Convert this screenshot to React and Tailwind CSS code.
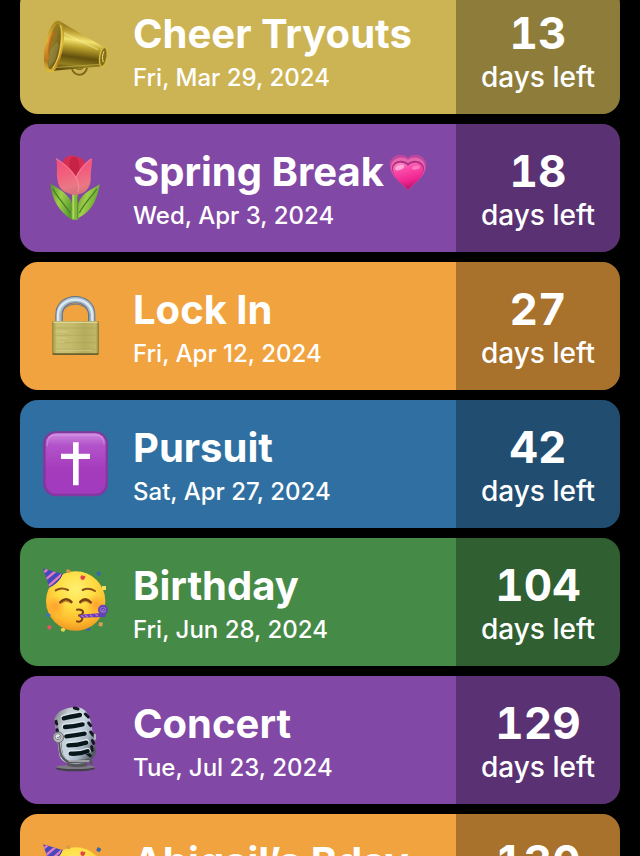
import React from 'react';

const Megaphone = () => (
  <svg viewBox="0 0 270 270" className="size-[90px] shrink-0" aria-hidden="true">
    <defs>
      <linearGradient id="mega-body" x1="0.55" y1="0" x2="0.4" y2="1">
        <stop offset="0" stopColor="#77631a" />
        <stop offset="0.2" stopColor="#b5982b" />
        <stop offset="0.38" stopColor="#f3e36f" />
        <stop offset="0.52" stopColor="#b9a02b" />
        <stop offset="0.72" stopColor="#63500c" />
        <stop offset="0.88" stopColor="#93801f" />
        <stop offset="1" stopColor="#5f4b0b" />
      </linearGradient>
      <linearGradient id="mega-mouth" x1="0" y1="0" x2="1" y2="0.3">
        <stop offset="0" stopColor="#c65f12" />
        <stop offset="0.5" stopColor="#8f7a24" />
        <stop offset="1" stopColor="#6f5b16" />
      </linearGradient>
      <linearGradient id="mega-rim" x1="0" y1="0" x2="0" y2="1">
        <stop offset="0" stopColor="#a88a1d" />
        <stop offset="0.4" stopColor="#dcb93c" />
        <stop offset="0.8" stopColor="#b7791a" />
        <stop offset="1" stopColor="#d9b93a" />
      </linearGradient>
    </defs>
    <path d="M127 188c1 13 10 20 21 20s20-8 22-20" fill="none" stroke="#7b6717" strokeWidth="8" />
    <path d="M129 187c2 12 10 18 19 18s17-7 19-18" fill="none" stroke="#d9c55c" strokeWidth="3" />
    <path d="M138 187c2 8 18 9 21 0" fill="none" stroke="#80701e" strokeWidth="4" />
    <path d="M92 50L222 127C229 141 226 170 216 184L64 198Z" fill="url(#mega-body)" />
    <path d="M99 82L204 134" stroke="#fff3a0" strokeWidth="4" opacity="0.45" />
    <path d="M72 188L210 178" stroke="#cdbb51" strokeWidth="3" opacity="0.6" />
    <ellipse cx="220" cy="156" rx="11" ry="29" transform="rotate(9 220 156)" fill="#83701c" stroke="#d7bb42" strokeWidth="4" />
    <path d="M222 139c-5 8-6 23-2 32" fill="none" stroke="#f3df77" strokeWidth="3" />
    <ellipse cx="72" cy="125" rx="22" ry="74" transform="rotate(10 72 125)" fill="url(#mega-mouth)" stroke="url(#mega-rim)" strokeWidth="10" />
    <path d="M69 82C54 104 49 136 54 164" fill="none" stroke="#ee7a21" strokeWidth="7" opacity="0.5" />
    <path d="M61 136l20-25 6 10-12 46-20 19Z" fill="#9fa06a" opacity="0.35" />
    <path d="M91 60C104 92 90 162 69 189" fill="none" stroke="#efd15c" strokeWidth="3" />
  </svg>
);

const Tulip = () => (
  <svg viewBox="0 9 270 270" className="size-[90px] shrink-0" aria-hidden="true">
    <defs>
      <linearGradient id="tulip-petal" x1="0" y1="0" x2="0.2" y2="1">
        <stop offset="0" stopColor="#f04b78" />
        <stop offset="0.5" stopColor="#f2607f" />
        <stop offset="0.85" stopColor="#ea7884" />
        <stop offset="1" stopColor="#d9747c" />
      </linearGradient>
      <linearGradient id="tulip-leaf" x1="0" y1="0" x2="1" y2="0.5">
        <stop offset="0" stopColor="#4e8c2c" />
        <stop offset="0.5" stopColor="#a1cf48" />
        <stop offset="1" stopColor="#579c30" />
      </linearGradient>
    </defs>
    <path d="M61 129C79 145 110 154 125 187L132 239 121 236C91 216 64 181 61 129Z" fill="url(#tulip-leaf)" />
    <path d="M209 132C188 149 157 155 145 190L139 239 149 232C180 216 202 184 209 132Z" fill="url(#tulip-leaf)" />
    <path d="M68 146C82 172 99 188 121 219M201 146C185 171 165 186 148 219" fill="none" stroke="#4a842a" strokeWidth="4" />
    <path d="M126 158h17l2 80q-11 4-20 0Z" fill="#82b63f" />
    <path d="M130 165v71" stroke="#b7d75b" strokeWidth="5" />
    <path d="M143 168v68" stroke="#518c2e" strokeWidth="3" />
    <path d="M96 69C105 47 125 42 139 50C155 49 162 61 166 72L144 119 102 103Z" fill="#d62e55" />
    <path d="M125 52C118 62 116 78 121 98L144 115C151 89 150 65 139 51Z" fill="#c62347" />
    <path d="M186 55C169 61 146 89 137 111L104 139C112 154 122 163 134 164C165 164 180 145 182 121C181 95 187 74 186 55Z" fill="url(#tulip-petal)" />
    <path d="M78 53C91 65 119 79 137 109C150 133 150 154 139 166C108 162 86 149 83 122C78 99 84 75 78 53Z" fill="url(#tulip-petal)" />
    <path d="M79 56C94 67 121 83 137 111C147 130 148 146 143 156" fill="none" stroke="#ff9aac" strokeWidth="3" opacity="0.7" />
    <path d="M184 57C169 66 149 91 139 111" fill="none" stroke="#ff8aa2" strokeWidth="3" opacity="0.7" />
  </svg>
);

const Lock = () => (
  <svg viewBox="0 3 270 270" className="size-[90px] shrink-0" aria-hidden="true">
    <defs>
      <linearGradient id="lock-body" x1="0" y1="0" x2="1" y2="0">
        <stop offset="0" stopColor="#9c9440" />
        <stop offset="0.09" stopColor="#c8bf70" />
        <stop offset="0.4" stopColor="#c4bb6c" />
        <stop offset="0.7" stopColor="#b5ac5c" />
        <stop offset="0.94" stopColor="#c0b869" />
        <stop offset="1" stopColor="#8c8439" />
      </linearGradient>
    </defs>
    <path d="M87 132V104C87 44 185 44 185 104V132" fill="none" stroke="#657587" strokeWidth="22" />
    <path d="M87 132V104C87 44 185 44 185 104V132" fill="none" stroke="#a8bac9" strokeWidth="16" />
    <path d="M84 130V104C86 47 181 42 187 102V130" fill="none" stroke="#dce9f5" strokeWidth="7" />
    <path d="M97 122V101C104 63 168 63 177 102V122" fill="none" stroke="#66798c" strokeWidth="3" />
    <rect x="67" y="124" width="139" height="101" rx="4" fill="#69612b" />
    <rect x="67" y="124" width="139" height="96" rx="4" fill="url(#lock-body)" />
    <path d="M70 127h133" stroke="#ded693" strokeWidth="4" />
    <path d="M73 144h127M73 166h127M73 188h127M73 208h127" stroke="#a79e52" strokeWidth="2" opacity="0.65" />
    <path d="M81 155h34M81 174h29M81 187h22M81 211h105" stroke="#e2dca2" strokeWidth="2" opacity="0.75" />
  </svg>
);

const Cross = () => (
  <svg viewBox="0 -3 270 270" className="size-[90px] shrink-0" aria-hidden="true">
    <defs>
      <linearGradient id="cross-tile" x1="0" y1="0" x2="0" y2="1">
        <stop offset="0" stopColor="#cc86dd" />
        <stop offset="0.2" stopColor="#b253ca" />
        <stop offset="0.6" stopColor="#a53bbd" />
        <stop offset="1" stopColor="#a23bbe" />
      </linearGradient>
    </defs>
    <rect x="39" y="34" width="195" height="195" rx="38" fill="#81389f" />
    <rect x="47" y="40" width="180" height="181" rx="31" fill="url(#cross-tile)" />
    <path d="M52 79V71Q52 45 79 45H194Q222 45 222 73" fill="none" stroke="#dea7e8" strokeWidth="4" opacity="0.45" />
    <path d="M129 67h17v34h34v16h-34v79h-17v-79H93v-16h36Z" fill="#fff" />
  </svg>
);

const PartyFace = () => (
  <svg viewBox="0 6 270 270" className="size-[90px] shrink-0" aria-hidden="true">
    <defs>
      <radialGradient id="party-face" cx="0.5" cy="0.3" r="0.7">
        <stop offset="0" stopColor="#fff071" />
        <stop offset="0.45" stopColor="#ffdc42" />
        <stop offset="0.8" stopColor="#fdb92c" />
        <stop offset="1" stopColor="#ef9822" />
      </radialGradient>
      <radialGradient id="party-cheek">
        <stop offset="0" stopColor="#ff8b2b" stopOpacity="0.65" />
        <stop offset="1" stopColor="#ff8b2b" stopOpacity="0" />
      </radialGradient>
      <clipPath id="party-hat">
        <path d="M39 40L97 57Q88 82 58 96Z" />
      </clipPath>
    </defs>
    <circle cx="137" cy="138" r="89" fill="url(#party-face)" />
    <circle cx="77" cy="153" r="31" fill="url(#party-cheek)" />
    <circle cx="197" cy="148" r="30" fill="url(#party-cheek)" />
    <g clipPath="url(#party-hat)">
      <rect x="34" y="34" width="72" height="66" fill="#4648bb" />
      <path d="M33 60L66 31M39 80L87 40M50 98L101 53" stroke="#e27bc2" strokeWidth="7" />
    </g>
    <path d="M58 96Q86 84 97 57" fill="none" stroke="#293aa9" strokeWidth="3" />
    <path d="M77 106Q94 95 114 105M158 105Q176 96 195 108" fill="none" stroke="#8b511b" strokeWidth="6" strokeLinecap="round" />
    <path d="M91 142Q107 124 124 141M151 141Q166 125 182 142" fill="none" stroke="#754013" strokeWidth="8" strokeLinecap="round" />
    <path d="M93 144Q107 135 121 142M154 142Q167 135 179 143" fill="none" stroke="#bd7a23" strokeWidth="3" />
    <path d="M141 164C154 162 162 168 158 176Q154 182 145 181Q158 184 157 191C156 199 148 202 141 199" fill="none" stroke="#744014" strokeWidth="6" strokeLinecap="round" />
    <path d="M148 179L224 173Q230 180 225 186L151 188Z" fill="#643fbc" />
    <path d="M154 181l7 5M166 180l7 6M180 179l7 6M196 177l8 6" stroke="#d56bc4" strokeWidth="4" />
    <circle cx="219" cy="164" r="12" fill="#9c73cf" stroke="#6144b1" strokeWidth="6" />
    <path d="M215 167Q213 158 221 159Q228 164 220 169" fill="none" stroke="#5638a8" strokeWidth="3" />
    <rect x="109" y="44" width="12" height="9" rx="2" transform="rotate(15 115 48)" fill="#d99845" />
    <path d="M151 65l5-5 4 3 6-1-1 8-6 6-7-4Z" fill="#e4434c" />
    <rect x="200" y="50" width="12" height="12" rx="2" transform="rotate(28 206 56)" fill="#3c67a8" />
    <rect x="216" y="93" width="12" height="12" fill="#f0df5b" />
    <rect x="206" y="202" width="12" height="12" rx="2" transform="rotate(10 212 208)" fill="#d99c57" />
    <path d="M48 177l7-3 8 6-7 7-7-2Z" fill="#3f73b8" />
    <path d="M51 215l5-5 9 3-1 9-8 2Z" fill="#dd5864" />
    <path d="M92 221l8-3 7 5-5 7-8-1Z" fill="#edd549" />
    <path d="M169 223l8-4 6 3-5 5h-8Z" fill="#405bb1" />
  </svg>
);

const Microphone = () => (
  <svg viewBox="0 0 270 270" className="size-[90px] shrink-0" aria-hidden="true">
    <defs>
      <linearGradient id="mic-body" x1="0" y1="0.1" x2="1" y2="0.7">
        <stop offset="0" stopColor="#777c82" />
        <stop offset="0.24" stopColor="#c3ccd3" />
        <stop offset="0.57" stopColor="#c6d5e1" />
        <stop offset="0.78" stopColor="#a5b4bf" />
        <stop offset="1" stopColor="#525963" />
      </linearGradient>
    </defs>
    <ellipse cx="136" cy="220" rx="59" ry="9" fill="#44404b" />
    <ellipse cx="136" cy="216" rx="58" ry="6" fill="#7d7a83" />
    <path d="M111 184h58l3 29q-30 8-59 0Z" fill="#55555c" />
    <path d="M73 73C80 46 112 35 142 37C166 39 176 60 183 82L198 166C200 189 176 204 146 207C117 209 92 201 88 180Z" fill="url(#mic-body)" />
    <path d="M75 78Q78 91 85 94L98 176Q98 185 90 187Z" fill="#868a90" />
    <path d="M133 39l11 3M166 57l9 9M176 84l6 8M182 111l7 9M187 137l4 8M185 155l2 11M171 175l10 7M78 79l2 8M81 104l2 6" stroke="#161820" strokeWidth="9" strokeLinecap="round" />
    <path d="M101 68Q117 64 150 58M105 94Q132 92 158 86M109 122Q137 119 164 114M115 149Q144 149 169 141M122 174Q149 176 173 167" fill="none" stroke="#dfe9f0" strokeWidth="17" strokeLinecap="round" />
    <path d="M101 70Q117 66 150 60M105 96Q132 94 158 88M109 124Q137 121 164 116M115 151Q144 151 169 143M122 176Q149 178 173 169" fill="none" stroke="#07171c" strokeWidth="13" strokeLinecap="round" />
    <path d="M89 137C92 163 89 188 117 202L166 197Q184 191 184 209" fill="none" stroke="#55575d" strokeWidth="9" />
    <path d="M91 140C94 168 94 185 116 196" fill="none" stroke="#c6cace" strokeWidth="3" />
    <path d="M116 198h62" stroke="#b9b8bd" strokeWidth="5" />
    <circle cx="85" cy="127" r="16" fill="#b7babf" stroke="#696c73" strokeWidth="3" />
    <circle cx="84" cy="125" r="9" fill="#e4e6e8" stroke="#85888e" strokeWidth="3" />
    <path d="M81 128Q88 132 90 122" fill="none" stroke="#6d7075" strokeWidth="3" />
    <path d="M193 117q5 8 0 18" fill="none" stroke="#b3b6bc" strokeWidth="6" />
  </svg>
);

const GrowingHeart = () => (
  <svg viewBox="0 0 120 120" className="size-10 shrink-0" aria-hidden="true">
    <defs>
      <linearGradient id="heart-fill" x1="0" y1="0" x2="0.3" y2="1">
        <stop offset="0" stopColor="#ff96c9" />
        <stop offset="0.3" stopColor="#fb4dab" />
        <stop offset="0.75" stopColor="#f02491" />
        <stop offset="1" stopColor="#c61570" />
      </linearGradient>
    </defs>
    <path d="M60 114C43 92 5 76 5 38C5 13 40-2 60 17C80-2 115 13 115 38C115 76 77 92 60 114Z" fill="#bd479f" />
    <path d="M60 114C44 94 9 77 9 44C9 20 41 8 60 24C79 8 111 20 111 44C111 77 76 94 60 114Z" fill="#e865ae" />
    <path d="M60 114C44 95 12 78 12 49C12 28 43 18 60 34C77 18 108 28 108 49C108 78 76 95 60 114Z" fill="#aa2e82" />
    <path d="M60 113C44 94 15 78 15 53C15 31 46 26 60 42C74 26 105 31 105 53C105 78 76 94 60 113Z" fill="url(#heart-fill)" />
    <ellipse cx="35" cy="47" rx="14" ry="7" transform="rotate(-20 35 47)" fill="#ffc1e1" opacity="0.75" />
    <ellipse cx="84" cy="47" rx="12" ry="6" transform="rotate(-12 84 47)" fill="#ff9fcd" opacity="0.6" />
  </svg>
);

const events = [
  { title: 'Cheer Tryouts', date: 'Fri, Mar 29, 2024', days: 13, color: 'bg-[#ccb454]', Icon: Megaphone },
  { title: 'Spring Break', date: 'Wed, Apr 3, 2024', days: 18, color: 'bg-[#8248a5]', Icon: Tulip, heart: true },
  { title: 'Lock In', date: 'Fri, Apr 12, 2024', days: 27, color: 'bg-[#f1a340]', Icon: Lock },
  { title: 'Pursuit', date: 'Sat, Apr 27, 2024', days: 42, color: 'bg-[#306fa1]', Icon: Cross },
  { title: 'Birthday', date: 'Fri, Jun 28, 2024', days: 104, color: 'bg-[#468a47]', Icon: PartyFace },
  { title: 'Concert', date: 'Tue, Jul 23, 2024', days: 129, color: 'bg-[#8248a5]', Icon: Microphone },
  { title: 'Abigail’s Bday', date: 'Wed, Jul 24, 2024', days: 130, color: 'bg-[#f1a340]', Icon: PartyFace },
];

const EventCard = ({ event }) => {
  const { title, date, days, color, Icon, heart } = event;

  return (
    <li className={`flex min-h-32 shrink-0 overflow-hidden rounded-[18px] ${color}`}>
      <div className="flex min-w-0 flex-1 items-center gap-[13px] pl-[10px]">
        <Icon />
        <div className="pt-2 whitespace-nowrap">
          <h2 className="flex items-center gap-1 text-[40px] leading-[48px] font-bold">
            {title}
            {heart && <GrowingHeart />}
          </h2>
          <p className="text-[24px] leading-[40px] font-medium">{date}</p>
        </div>
      </div>
      <div className="flex w-[164px] shrink-0 flex-col items-center justify-center bg-black/30 pt-1.5">
        <span className="text-[44px] leading-[48px] font-bold tabular-nums">{days}</span>
        <span className="text-[28px] leading-[40px] font-medium">days left</span>
      </div>
    </li>
  );
};

const App = () => {
  return (
    <main className="h-screen overflow-hidden bg-black px-5 font-['Inter','Liberation_Sans',sans-serif] text-white">
      <ul className="-mt-[14px] flex flex-col gap-[10px]">
        {events.map((event) => (
          <EventCard key={event.title} event={event} />
        ))}
      </ul>
    </main>
  );
};

export default App;
